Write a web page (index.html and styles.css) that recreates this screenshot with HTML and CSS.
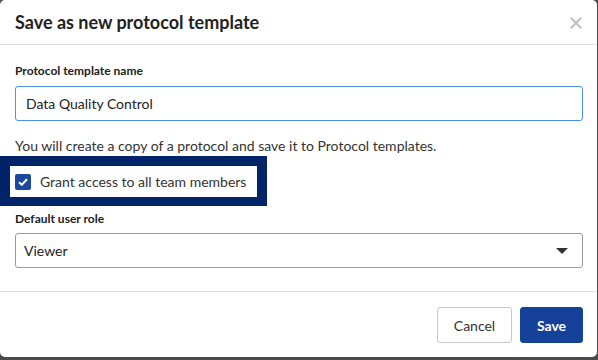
FILE: index.html
```html
<!DOCTYPE html>
<html>
<head>
<meta charset="utf-8">
<link rel="stylesheet" href="styles.css">
</head>
<body>
<div class="dialog">
  <div class="header">
    <h1 class="title">Save as new protocol template</h1>
    <span class="close">
      <svg width="12" height="12" viewBox="0 0 12 12"><path d="M1.5 1.5 L10.5 10.5 M10.5 1.5 L1.5 10.5" stroke="#c2c2c2" stroke-width="2.2" stroke-linecap="square"/></svg>
    </span>
  </div>
  <div class="body">
    <div class="label">Protocol template name</div>
    <div class="input">Data Quality Control</div>
    <p class="info">You will create a copy of a protocol and save it to Protocol templates.</p>
    <div class="highlight">
      <label class="check">
        <span class="box">
          <svg width="10" height="8" viewBox="0 0 10 8"><path d="M1 4.2 L3.8 6.8 L9 1.3" fill="none" stroke="#fff" stroke-width="2"/></svg>
        </span>
        <span>Grant access to all team members</span>
      </label>
    </div>
    <div class="label label2">Default user role</div>
    <div class="select">
      <span>Viewer</span>
      <span class="caret"></span>
    </div>
  </div>
  <div class="footer">
    <button class="btn cancel">Cancel</button>
    <button class="btn save">Save</button>
  </div>
</div>
</body>
</html>
```
FILE: styles.css
```css
* { box-sizing: border-box; }
html, body { margin: 0; padding: 0; }
body {
  background: #4b4b4b;
  width: 598px;
  height: 360px;
  overflow: hidden;
  font-family: Lato, "Open Sans", sans-serif;
  color: #333;
}
.dialog {
  width: 597px;
  height: 357px;
  background: #fff;
  border-radius: 5px;
  display: flex;
  flex-direction: column;
}
.header {
  height: 45px;
  border-bottom: 1px solid #e1e1e1;
  display: flex;
  align-items: center;
  justify-content: space-between;
  padding: 0 15px 0 15px;
}
.title {
  margin: 0;
  font-size: 18px;
  font-weight: 700;
  color: #222;
  line-height: 20px;
}
.close { display: flex; padding-top: 2px; }
.body {
  padding: 18px 14px 0 15px;
  height: 247px;
  border-bottom: 1px solid #e1e1e1;
}
.label {
  font-size: 12px;
  font-weight: 700;
  color: #222;
  line-height: 16px;
}
.input {
  margin-top: 7px;
  height: 35px;
  border: 1px solid #4d90e8;
  border-radius: 3px;
  font-size: 14px;
  line-height: 33px;
  padding-left: 10px;
  color: #222;
}
.info {
  margin: 16px 0 0 0;
  font-size: 14px;
  line-height: 18px;
  color: #333;
}
.highlight {
  margin: 1px 0 0 -15px;
  width: 267px;
  height: 50px;
  background: #012468;
  padding: 10px;
}
.check {
  background: #fff;
  height: 31px;
  display: flex;
  align-items: center;
  padding-left: 5px;
  font-size: 14px;
  color: #333;
  gap: 9px;
}
.box {
  width: 16px;
  height: 16px;
  background: #1b479e;
  border-radius: 2px;
  display: flex;
  align-items: center;
  justify-content: center;
}
.label2 { margin-top: 5px; }
.select {
  margin-top: 6px;
  height: 35px;
  border: 1px solid #9a9a9a;
  border-radius: 3px;
  display: flex;
  align-items: center;
  justify-content: space-between;
  padding: 0 14px 0 8px;
  font-size: 14px;
  color: #222;
}
.caret {
  width: 0; height: 0;
  border-left: 6px solid transparent;
  border-right: 6px solid transparent;
  border-top: 6px solid #333;
}
.footer {
  flex: 1;
  display: flex;
  justify-content: flex-end;
  align-items: flex-start;
  padding: 15px 14px 0 0;
  gap: 8px;
}
.btn {
  height: 36px;
  border-radius: 3px;
  font-family: Lato, "Open Sans", sans-serif;
  font-size: 14px;
  cursor: pointer;
}
.cancel {
  width: 75px;
  background: #fff;
  border: 1px solid #c8c8c8;
  color: #333;
}
.save {
  width: 63px;
  background: #15419a;
  border: 1px solid #15419a;
  color: #fff;
  font-weight: 700;
}
```
